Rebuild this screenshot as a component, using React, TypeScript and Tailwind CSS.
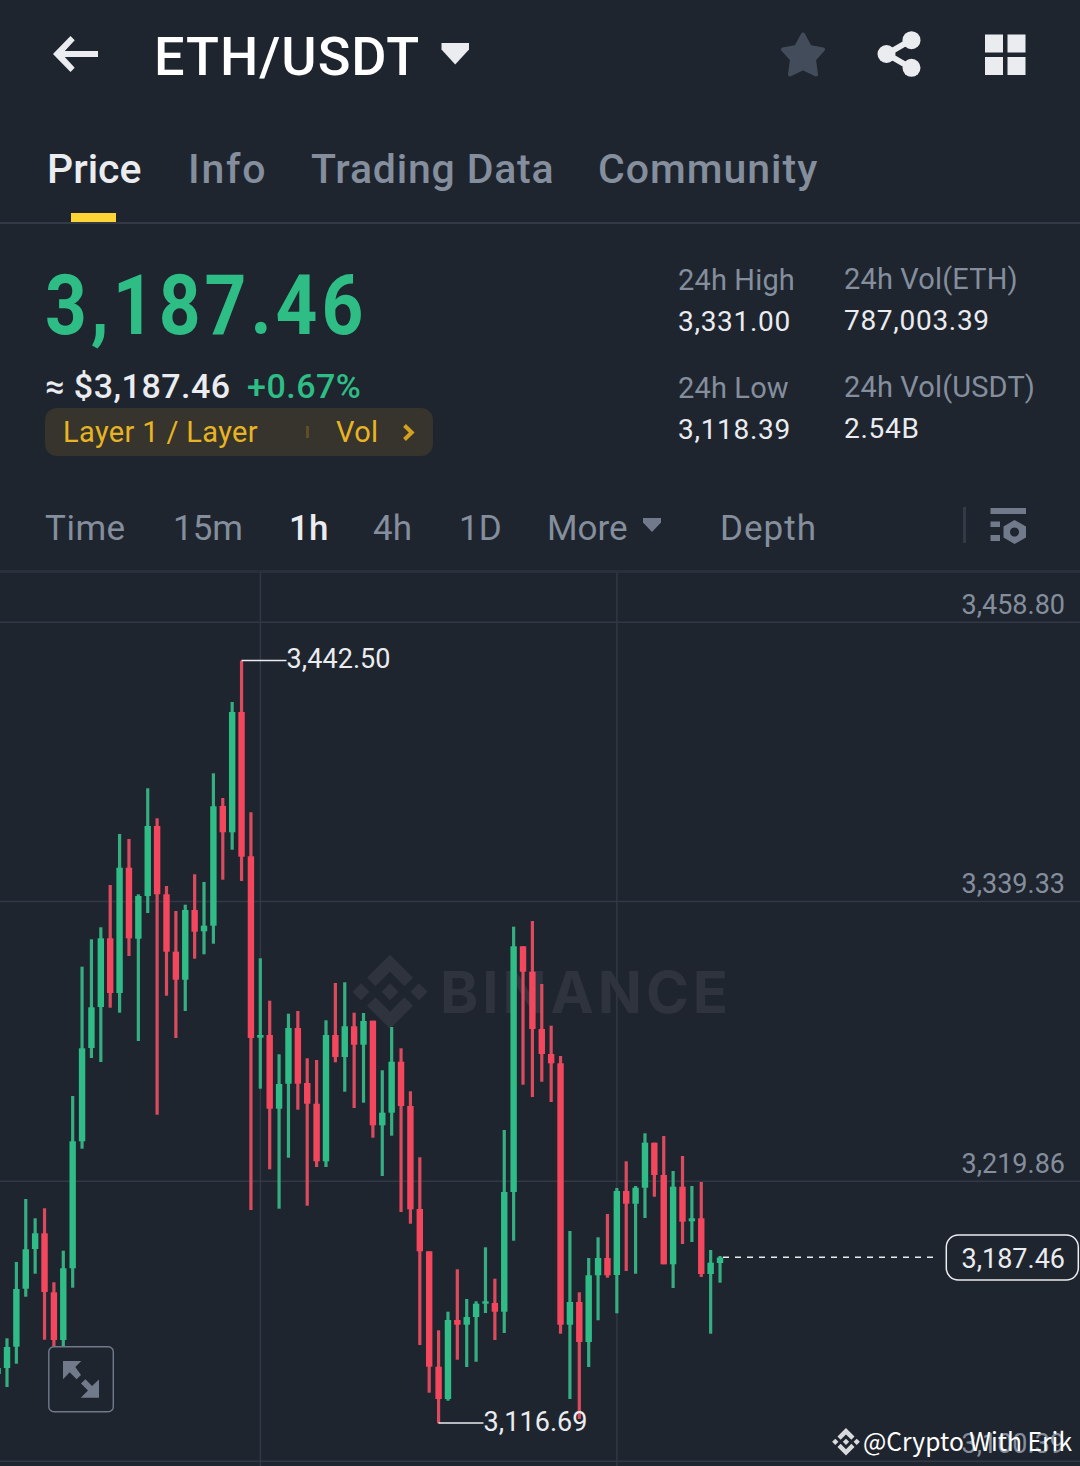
import React from "react";

type Candle = [up: 0 | 1, high: number, top: number, bottom: number, low: number];

const CANDLES: Candle[] = [
  [1, 1366, 1368, 1374, 1374],
  [1, 1338.3, 1347, 1368, 1387],
  [1, 1262, 1289, 1346.7, 1363.7],
  [1, 1199, 1249.3, 1288.7, 1296.7],
  [1, 1218.3, 1233.3, 1249, 1273.7],
  [0, 1208.3, 1233.3, 1292, 1339.7],
  [0, 1282.3, 1292.3, 1340, 1360],
  [1, 1250.7, 1268.3, 1340, 1350],
  [1, 1096, 1141.3, 1268.3, 1287.7],
  [1, 966.7, 1048.3, 1141.3, 1148.7],
  [1, 939.3, 1007.3, 1048, 1058],
  [1, 927.3, 938.3, 1007, 1062],
  [0, 885, 938.3, 993, 1007.7],
  [1, 834, 867.7, 993, 1012.7],
  [0, 839, 867.7, 938.3, 956],
  [1, 894.3, 896, 938.7, 1041],
  [1, 788.3, 826, 896, 913],
  [0, 818.3, 826, 894.3, 1114.7],
  [0, 886, 894.3, 951.7, 995.7],
  [0, 911, 951.7, 979.7, 1038],
  [1, 904.7, 910, 979.7, 1011],
  [0, 874.3, 910, 931.7, 958.7],
  [1, 882, 925.7, 931.3, 954.3],
  [1, 773.3, 806.3, 925.7, 943.7],
  [0, 798, 806, 832.3, 879.7],
  [1, 702, 712, 832.3, 849.7],
  [0, 660.7, 712, 856.7, 881],
  [0, 812.3, 856.3, 1038, 1210],
  [1, 958.3, 1035, 1037.7, 1088.7],
  [0, 1000.7, 1035, 1108.7, 1169.3],
  [1, 1054.3, 1084, 1108.7, 1208.7],
  [1, 1013.7, 1028, 1083.7, 1157.7],
  [0, 1011, 1028, 1083.7, 1109.7],
  [0, 1058.3, 1083, 1103.7, 1205.7],
  [0, 1060, 1103.7, 1161.3, 1167],
  [1, 1020.3, 1035, 1161.3, 1167],
  [0, 983, 1035, 1057, 1062.3],
  [1, 982.3, 1026.3, 1057, 1091.7],
  [0, 1012.7, 1026.3, 1044.7, 1108],
  [1, 1013, 1021, 1044.7, 1102.7],
  [0, 1020.7, 1020.7, 1125.3, 1137.7],
  [1, 1070.3, 1112.7, 1125.3, 1176],
  [1, 1027, 1061.7, 1112.7, 1135.7],
  [0, 1048.3, 1061.7, 1106, 1212],
  [0, 1091.3, 1106, 1209.3, 1223.7],
  [0, 1157.3, 1209, 1251.3, 1345],
  [0, 1251.3, 1251.3, 1366.7, 1392.7],
  [0, 1330.3, 1366.7, 1399, 1423.3],
  [1, 1311.7, 1320, 1399, 1400.7],
  [0, 1269.3, 1320, 1324.7, 1359.7],
  [1, 1299, 1317, 1324.7, 1367],
  [1, 1301.3, 1303.7, 1317, 1361.7],
  [1, 1247.3, 1301.3, 1303.7, 1313],
  [0, 1278.7, 1303, 1311.7, 1340],
  [1, 1130, 1192, 1311.7, 1333],
  [1, 926.7, 946.3, 1192, 1240.7],
  [0, 946.3, 946.3, 971.7, 1084.7],
  [0, 921, 971.7, 1029, 1097],
  [0, 984, 1029, 1054, 1081.7],
  [0, 1025.7, 1054, 1063.3, 1102],
  [0, 1056, 1063.3, 1324.7, 1333.7],
  [1, 1231, 1302, 1324.7, 1399],
  [0, 1292.3, 1302, 1342, 1419],
  [1, 1258, 1275.3, 1342, 1367],
  [1, 1237.3, 1258, 1275.3, 1320.3],
  [0, 1214, 1258, 1275.3, 1277.7],
  [1, 1188, 1191, 1275, 1313.3],
  [0, 1161.3, 1191, 1203.7, 1271],
  [1, 1186, 1187.7, 1203.7, 1273.7],
  [1, 1133.3, 1142.7, 1187.7, 1218],
  [0, 1142.7, 1142.7, 1175, 1196.7],
  [0, 1136, 1175, 1264.3, 1264.3],
  [1, 1171, 1186.7, 1264.3, 1288],
  [0, 1156, 1186.7, 1221.7, 1244],
  [1, 1186, 1218.3, 1221.3, 1242],
  [0, 1182, 1218.3, 1274, 1277],
  [1, 1250, 1262.7, 1274, 1333.7],
  [1, 1256, 1257.5, 1263, 1282.7],
];

const GRID_Y = [622.3, 901.5, 1181.3, 1461.3];
const GRID_X = [260.4, 616.9];
const AXIS: [string, number][] = [
  ["3,458.80", 613.5],
  ["3,339.33", 892.7],
  ["3,219.86", 1172.7],
  ["3,100.39", 1452.5],
];

function BinanceMark() {
  return (
    <path d="M0-37 23-14 14.5-5.5 0-20-14.5-5.5-23-14ZM0 37 23 14 14.5 5.5 0 20-14.5 5.5-23 14ZM0-8.5 8.5 0 0 8.5-8.5 0ZM-29-8.5-20.5 0-29 8.5-37.5 0ZM29-8.5 37.5 0 29 8.5 20.5 0Z" />
  );
}

function Chart() {
  return (
    <svg
      className="block h-[893px] w-[1080px]"
      viewBox="0 573 1080 893"
      fontFamily="Roboto, sans-serif"
      fontSize="27"
    >
      <g stroke="#323945" strokeWidth="1.5">
        {GRID_Y.map((y) => (
          <line key={y} x1="0" x2="1080" y1={y} y2={y} />
        ))}
        {GRID_X.map((x) => (
          <line key={x} x1={x} x2={x} y1="573" y2="1466" />
        ))}
      </g>
      <g fill="#2f333e">
        <g transform="translate(390 991.8)">
          <BinanceMark />
        </g>
        <text
          x="440"
          y="1013"
          fontFamily="Inter, sans-serif"
          fontWeight="700"
          fontSize="58"
          textLength="288"
        >
          BINANCE
        </text>
      </g>
      {CANDLES.map(([up, high, top, bottom, low], i) => {
        const x = 7 + (i - 1) * 9.382;
        return (
          <g key={i}>
            <rect x={x - 1.6} y={high} width="3.2" height={low - high} fill={up ? "#35ae81" : "#dc4b5d"} />
            <rect x={x - 3.2} y={top} width="6.4" height={bottom - top} fill={up ? "#2fbc86" : "#f4475e"} />
          </g>
        );
      })}
      <g stroke="#eaecef" strokeWidth="1.5">
        <line x1="241.5" x2="286.5" y1="660.5" y2="660.5" />
        <line x1="438.5" x2="483.5" y1="1423" y2="1423" />
        <line x1="723" x2="934" y1="1257.3" y2="1257.3" strokeDasharray="6 6" />
      </g>
      <g fill="#eaecef">
        <text x="286.5" y="667.5" textLength="104">3,442.50</text>
        <text x="483.5" y="1431" textLength="104">3,116.69</text>
      </g>
      <g fill="#848e9c">
        {AXIS.map(([label, y]) => (
          <text key={label} x="961.5" y={y} textLength="103.500">{label}</text>
        ))}
      </g>
      <rect x="946.3" y="1235" width="132" height="45" rx="12" fill="#1f252f" stroke="#eaecef" strokeWidth="1.5" />
      <text x="961.5" y="1267.7" fill="#eaecef" textLength="103.500">3,187.46</text>

      <rect x="48.8" y="1346.8" width="64.5" height="65" rx="5" fill="#1f252f" stroke="#707a8a" strokeWidth="1.4" />
      <path
        fill="#707a8a"
        d="M63 1361H81.3L75.300 1367 81 1375 76.600 1379.300 69.700 1372.300 63 1379.300ZM99 1397.800H80.700L88 1390.500 81 1383.500 85.400 1379.300 92 1386 99 1379.500Z"
      />

      <g fill="#d9dadc" transform="translate(846 1441.8) scale(.37)">
        <BinanceMark />
      </g>
      <text
        x="863"
        y="1451"
        fill="#ffffff"
        fontFamily="'Noto Sans CJK SC', sans-serif"
        fontWeight="400"
        fontSize="25"
        textLength="209"
        lengthAdjust="spacingAndGlyphs"
      >
        @Crypto With Erik
      </text>
    </svg>
  );
}

function Header() {
  return (
    <header className="flex h-[108px] items-center pl-[53px] pr-[54px] text-[#eaecef]">
      <svg className="h-9 w-[45px]" viewBox="0 0 45 36" fill="currentColor">
        <path d="M17.500 0 21.700 4.200 11.800 15H45V21H11.800L21.700 31.800 17.500 36 0 18Z" />
      </svg>
      <h1 className="ml-[56px] w-[266px] whitespace-nowrap pt-[5px] text-[54px] font-medium leading-none tracking-[1px] text-white">
        ETH/USDT
      </h1>
      <svg className="ml-[21px] h-[22px] w-7" viewBox="0 0 28 22" fill="currentColor">
        <path d="M.5 0H28V6.500L14.200 21.500.5 6.500Z" />
      </svg>
      <svg className="ml-auto h-[46px] w-[46px]" viewBox="0 0 46 46" fill="#434c5a" stroke="#434c5a" strokeWidth="4" strokeLinejoin="round">
        <path d="m23 3.500 6.800 12.500L43 18.500 34 28.500l2 15L23 37.200 10 43.500l2-15L3 18.500 16.200 16Z" />
      </svg>
      <svg className="ml-[51px] h-[46px] w-[44px]" viewBox="0 0 44 46" fill="currentColor">
        <path d="M34 9 10 23l24 14" fill="none" stroke="currentColor" strokeWidth="6" />
        <circle cx="34.500" cy="9.200" r="9" />
        <circle cx="9.500" cy="23" r="9" />
        <circle cx="34.500" cy="36.800" r="9" />
      </svg>
      <svg className="ml-[64px] h-[41px] w-[41px]" viewBox="0 0 41 41" fill="currentColor">
        <path d="M0 .5H18V18.500H0ZM22.500.5H40.500V18.500H22.500ZM0 23H18V41H0ZM22.500 23H40.500V41H22.500Z" />
      </svg>
    </header>
  );
}

function Tabs() {
  return (
    <nav className="flex h-[116px] items-stretch whitespace-nowrap border-b-2 border-[#333a45] pl-[47px] text-[41px] font-medium leading-[122px] text-[#848e9c]">
      <div className="relative w-[141px] text-[#eaecef]">
        <span>Price</span>
        <i className="absolute bottom-0 left-[24px] h-[9px] w-[45px] bg-[#fcd535]" />
      </div>
      <div className="w-[123px] tracking-[1.8px]">Info</div>
      <div className="w-[287px] tracking-[0.8px]">Trading Data</div>
      <div className="tracking-[1px]">Community</div>
    </nav>
  );
}

function Stat({ label, value }: { label: string; value: string }) {
  return (
    <div className="whitespace-nowrap text-[29px] leading-[42px]">
      <div className="tracking-[0.15px] text-[#848e9c]">{label}</div>
      <div className="text-[28px] tracking-[0.7px] text-[#eaecef]">{value}</div>
    </div>
  );
}

function Summary() {
  return (
    <section className="flex h-[264px]">
      <div className="w-[678px] shrink-0 pl-[45px] pt-10">
        <div className="h-[84px] origin-left scale-x-[0.88] whitespace-nowrap text-[83px] font-bold leading-[84px] tracking-[4.5px] text-[#2ebd85]">
          3,187.46
        </div>
        <div className="mt-4 flex h-11 whitespace-nowrap text-[34px] leading-[44px]">
          <span className="w-[202px] font-medium tracking-[0.5px] text-[#eaecef]">≈ $3,187.46</span>
          <span className="font-medium tracking-[0.5px] text-[#2ebd85]">+0.67%</span>
        </div>
        <div className="flex h-12 w-[388px] items-center rounded-xl bg-[#36342c] pl-[18px] text-[29px] leading-[50px] text-[#e8b424]">
          <span className="w-[243px] whitespace-nowrap tracking-[0.35px]">Layer 1 / Layer</span>
          <i className="h-3 w-[3px] bg-[#5e4d29]" />
          <span className="ml-[27px] w-[67px] tracking-[0.35px]">Vol</span>
          <svg className="h-[17px] w-3" viewBox="0 0 12 17" fill="none" stroke="#d3a01f" strokeWidth="4">
            <path d="m1.500 1.500 7.200 7-7.200 7" />
          </svg>
        </div>
      </div>
      <div className="flex gap-[49px] pt-[35px]">
        <div className="flex w-[117px] flex-col gap-6">
          <Stat label="24h High" value="3,331.00" />
          <Stat label="24h Low" value="3,118.39" />
        </div>
        <div className="-mt-px flex flex-col gap-6">
          <Stat label="24h Vol(ETH)" value="787,003.39" />
          <Stat label="24h Vol(USDT)" value="2.54B" />
        </div>
      </div>
    </section>
  );
}

function Intervals() {
  return (
    <div className="flex h-[85px] items-center whitespace-nowrap border-b-[3px] border-[#2a303b] pl-[45px] text-[35px] leading-[84px] text-[#848e9c]">
      <span className="w-[128px] tracking-[0.5px]">Time</span>
      <span className="w-[116px]">15m</span>
      <span className="w-[84px] font-medium text-[#eaecef]">1h</span>
      <span className="w-[86px]">4h</span>
      <span className="w-[88px]">1D</span>
      <span className="w-[96px]">More</span>
      <svg className="mb-2 h-[14px] w-[18px]" viewBox="0 0 18 14" fill="#707a8a">
        <path d="M0 0H18V4.500L9 14 0 4.500Z" />
      </svg>
      <span className="ml-[59px] w-[243px] tracking-[1px]">Depth</span>
      <i className="mb-2 h-9 w-[3px] bg-[#333a45]" />
      <svg className="mb-[6px] ml-[24px] h-9 w-9" viewBox="0 0 36 36" fill="#707a8a">
        <path d="M.5 0H36V6H.5ZM.5 13.500H10V19H.5ZM.5 27H10V33H.5Z" />
        <path fillRule="evenodd" d="M24.500 12 36 18.500V29.500L24.500 36 13.500 29.500V18.500ZM24.500 19.500a4.500 4.500 0 1 0 .01 0Z" />
      </svg>
    </div>
  );
}

export default function App() {
  return (
    <main className="h-[1466px] w-[1080px] overflow-hidden bg-[#1f252f] font-[Roboto,sans-serif]">
      <Header />
      <Tabs />
      <Summary />
      <Intervals />
      <Chart />
    </main>
  );
}
